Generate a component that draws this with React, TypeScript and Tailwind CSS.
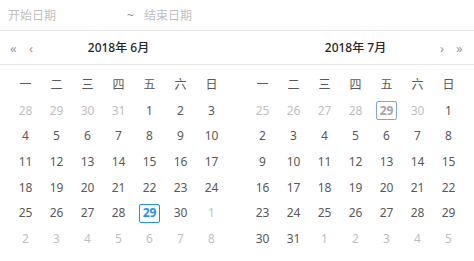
import React from "react";

const FONT = { fontFamily: '"Noto Sans", "Noto Sans CJK SC", sans-serif' };
const WEEK = ["一", "二", "三", "四", "五", "六", "日"];

type Cell = { d: number; muted?: boolean; today?: boolean; todayMuted?: boolean };

function build(start: number[], prevCount: number, days: number, nextCount: number, todayIdx: number, todayMuted: boolean): Cell[] {
  const cells: Cell[] = [];
  start.slice(0, prevCount).forEach((d) => cells.push({ d, muted: true }));
  for (let i = 1; i <= days; i++) cells.push({ d: i });
  for (let i = 1; i <= nextCount; i++) cells.push({ d: i, muted: true });
  cells[todayIdx] = { ...cells[todayIdx], today: !todayMuted, todayMuted };
  return cells;
}

const june = build([28, 29, 30, 31], 4, 30, 8, 32, false);
const july = build([25, 26, 27, 28, 29, 30], 6, 31, 5, 4, true);

function Panel({ title, cells, left }: { title: string; cells: Cell[]; left: boolean }) {
  return (
    <div className="w-[237px] flex flex-col">
      <div className="relative h-[34px] flex items-center justify-center border-b border-[#e8e8e8]">
        {left ? (
          <>
            <span className="absolute left-[10px] top-[8px] text-[13px] text-[#9a9a9a]">«</span>
            <span className="absolute left-[29px] top-[8px] text-[13px] text-[#9a9a9a]">‹</span>
          </>
        ) : (
          <>
            <span className="absolute left-[203px] top-[8px] text-[13px] text-[#9a9a9a]">›</span>
            <span className="absolute left-[219px] top-[8px] text-[13px] text-[#9a9a9a]">»</span>
          </>
        )}
        <span className="text-[12px] font-medium text-[#262626] pt-[1px]">{title}</span>
      </div>
      <div className="px-[10px] pt-[6px]">
        <div className="grid grid-cols-[repeat(7,31px)] h-[27px] items-center">
          {WEEK.map((w) => (
            <div key={w} className="text-center text-[12px] text-[#595959]">{w}</div>
          ))}
        </div>
        <div className="grid grid-cols-[repeat(7,31px)] auto-rows-[25.66px]">
          {cells.map((c, i) => (
            <div key={i} className="flex items-center justify-center">
              {c.today ? (
                <span className="w-[21px] h-[19px] flex items-center justify-center border border-[#1890ff] rounded-[2px] text-[12px] font-bold text-[#1890ff]">
                  {c.d}
                </span>
              ) : c.todayMuted ? (
                <span className="w-[21px] h-[19px] flex items-center justify-center border border-[#7aa7e0] rounded-[2px] text-[12px] font-bold text-[#a6a6a6]">
                  {c.d}
                </span>
              ) : (
                <span className={`text-[12px] ${c.muted ? "text-[#bfbfbf]" : "text-[#595959]"}`}>{c.d}</span>
              )}
            </div>
          ))}
        </div>
      </div>
    </div>
  );
}

export default function App() {
  return (
    <div className="w-[474px] h-[261px] bg-white overflow-hidden" style={FONT}>
      <div className="h-[31px] pt-[2px] flex items-center border-b border-[#e8e8e8] text-[12px] text-[#bfbfbf]">
        <span className="ml-[8px] w-[119px]">开始日期</span>
        <span className="w-[17px] text-[#8c8c8c]">~</span>
        <span>结束日期</span>
      </div>
      <div className="flex">
        <Panel title="2018年 6月" cells={june} left={true} />
        <Panel title="2018年 7月" cells={july} left={false} />
      </div>
    </div>
  );
}
